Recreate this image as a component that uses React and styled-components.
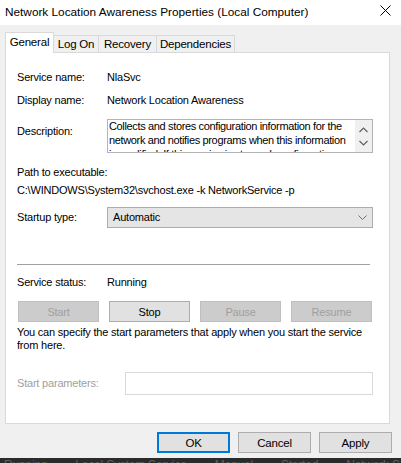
import React from 'react';
import styled, { createGlobalStyle } from 'styled-components';

const GlobalStyle = createGlobalStyle`
  html, body {
    margin: 0;
    padding: 0;
    background: #f0f0f0;
  }
  body {
    font-family: "Liberation Sans", Arial, sans-serif;
    font-size: 11px;
    letter-spacing: -0.2px;
    color: #000;
  }
`;

const tabs = [
  { label: 'General', width: 49 },
  { label: 'Log On', width: 46 },
  { label: 'Recovery', width: 59 },
  { label: 'Dependencies', width: 79 },
];

const description = [
  'Collects and stores configuration information for the',
  'network and notifies programs when this information',
  'is modified. If this service is stopped, configuration',
];

const App = () => {
  return (
    <>
      <GlobalStyle />
      <Window>
        <TitleBar>
          <Title>Network Location Awareness Properties (Local Computer)</Title>
          <CloseIcon width="11" height="11" viewBox="0 0 11 11">
            <path d="M0.5 0.5 L10.5 10.5 M10.5 0.5 L0.5 10.5" stroke="#000" strokeWidth="1" />
          </CloseIcon>
        </TitleBar>

        <Body>
          <TabRow>
            {tabs.map((t, i) => (
              <Tab key={t.label} $width={t.width} $active={i === 0}>
                {t.label}
              </Tab>
            ))}
          </TabRow>

          <Panel>
            <FieldRow $mt={0}>
              <Label>Service name:</Label>
              <Value>NlaSvc</Value>
            </FieldRow>
            <FieldRow $mt={8}>
              <Label>Display name:</Label>
              <Value>Network Location Awareness</Value>
            </FieldRow>

            <FieldRow $mt={11} $top>
              <Label $pt={5}>Description:</Label>
              <DescBox>
                <DescText>
                  {description.map((line) => (
                    <DescLine key={line}>{line}</DescLine>
                  ))}
                </DescText>
                <ScrollBar>
                  <svg width="9" height="6" viewBox="0 0 9 6">
                    <path d="M0.5 5 L4.5 1 L8.5 5" fill="none" stroke="#606060" strokeWidth="1.2" />
                  </svg>
                  <svg width="9" height="6" viewBox="0 0 9 6">
                    <path d="M0.5 1 L4.5 5 L8.5 1" fill="none" stroke="#606060" strokeWidth="1.2" />
                  </svg>
                </ScrollBar>
              </DescBox>
            </FieldRow>

            <PathBlock>
              <div>Path to executable:</div>
              <div>C:\WINDOWS\System32\svchost.exe -k NetworkService -p</div>
            </PathBlock>

            <FieldRow $mt={8}>
              <Label>Startup type:</Label>
              <Dropdown>
                <span>Automatic</span>
                <svg width="9" height="5" viewBox="0 0 9 5">
                  <path d="M0.5 0.5 L4.5 4.5 L8.5 0.5" fill="none" stroke="#707070" strokeWidth="1" />
                </svg>
              </Dropdown>
            </FieldRow>

            <Separator />

            <FieldRow $mt={10}>
              <Label>Service status:</Label>
              <Value>Running</Value>
            </FieldRow>

            <ButtonGrid>
              <ServiceButton disabled>Start</ServiceButton>
              <ServiceButton>Stop</ServiceButton>
              <ServiceButton disabled>Pause</ServiceButton>
              <ServiceButton disabled>Resume</ServiceButton>
            </ButtonGrid>

            <Hint>
              You can specify the start parameters that apply when you start the service
              <br />
              from here.
            </Hint>

            <FieldRow $mt={20} $label={108}>
              <Label $disabled>Start parameters:</Label>
              <ParamInput />
            </FieldRow>
          </Panel>

          <Footer>
            <DialogButton $default>OK</DialogButton>
            <DialogButton>Cancel</DialogButton>
            <DialogButton>Apply</DialogButton>
          </Footer>
        </Body>

        <BehindStrip>
          <span>Running</span>
          <span>Local System Service</span>
          <span>Manual</span>
          <span>Started</span>
          <span>Network Service</span>
        </BehindStrip>
      </Window>
    </>
  );
};

const Window = styled.div`
  width: 401px;
  height: 463px;
  display: flex;
  flex-direction: column;
  background: #f0f0f0;
  overflow: hidden;
`;

const TitleBar = styled.div`
  height: 25px;
  flex: none;
  background: #fff;
  display: flex;
  align-items: center;
  justify-content: space-between;
  padding: 0 10px 0 5px;
  box-sizing: border-box;
`;

const Title = styled.span`
  font-size: 11.8px;
  letter-spacing: 0;
  color: #000;
  white-space: nowrap;
  margin-top: -2px;
`;

const CloseIcon = styled.svg`
  display: block;
  margin-top: -4px;
`;

const Body = styled.div`
  flex: 1;
  padding: 7px 11px 0 5px;
  display: flex;
  flex-direction: column;
`;

const TabRow = styled.div`
  display: flex;
  align-items: flex-end;
  height: 21px;
  margin-bottom: -1px;
  position: relative;
  z-index: 1;
`;

const Tab = styled.div`
  width: ${(p) => p.$width}px;
  height: ${(p) => (p.$active ? 21 : 18)}px;
  box-sizing: border-box;
  display: flex;
  align-items: center;
  justify-content: center;
  padding-bottom: ${(p) => (p.$active ? 2 : 0)}px;
  border: 1px solid #d9d9d9;
  border-bottom: ${(p) => (p.$active ? 'none' : '1px solid #d9d9d9')};
  background: ${(p) => (p.$active ? '#fff' : '#f0f0f0')};
  margin-left: -1px;
  white-space: nowrap;
  font-size: 11.5px;

  &:first-child {
    margin-left: 0;
  }
`;

const Panel = styled.div`
  height: 372px;
  box-sizing: border-box;
  background: #fff;
  border: 1px solid #d9d9d9;
  padding: 17px 16px 0 11px;
  display: flex;
  flex-direction: column;
`;

const FieldRow = styled.div`
  display: grid;
  grid-template-columns: ${(p) => p.$label || 90}px 1fr;
  align-items: ${(p) => (p.$top ? 'start' : 'center')};
  margin-top: ${(p) => p.$mt}px;
  line-height: 15px;
`;

const Label = styled.div`
  padding-top: ${(p) => p.$pt || 0}px;
  color: ${(p) => (p.$disabled ? '#a0a0a0' : '#000')};
  white-space: nowrap;
`;

const Value = styled.div`
  white-space: nowrap;
`;

const DescBox = styled.div`
  height: 34px;
  box-sizing: border-box;
  border: 1px solid #b4b4b4;
  display: flex;
  overflow: hidden;
`;

const DescText = styled.div`
  flex: 1;
  min-width: 0;
  padding: 0 0 0 1px;
  line-height: 14px;
  letter-spacing: -0.35px;
  overflow: hidden;
  margin-top: -1px;
`;

const DescLine = styled.div`
  white-space: nowrap;
`;

const ScrollBar = styled.div`
  width: 17px;
  flex: none;
  background: #f0f0f0;
  display: flex;
  flex-direction: column;
  align-items: center;
  justify-content: space-around;
  padding: 4px 0 3px;
  box-sizing: border-box;

  svg {
    display: block;
  }
`;

const PathBlock = styled.div`
  margin-top: 10px;
  line-height: 18px;
  white-space: nowrap;
`;

const Dropdown = styled.div`
  height: 21px;
  box-sizing: border-box;
  background: #e5e5e5;
  border: 1px solid #acacac;
  display: flex;
  align-items: center;
  justify-content: space-between;
  padding: 0 5px 0 5px;

  svg {
    display: block;
  }
`;

const Separator = styled.div`
  height: 1px;
  width: 353px;
  background: #a0a0a0;
  margin-top: 36px;
`;

const ButtonGrid = styled.div`
  display: grid;
  grid-template-columns: repeat(4, 81px);
  column-gap: 10px;
  margin: 11px 0 0 1px;
`;

const ServiceButton = styled.div`
  height: 21px;
  box-sizing: border-box;
  display: flex;
  align-items: center;
  justify-content: center;
  background: ${(p) => (p.disabled ? '#cccccc' : '#e1e1e1')};
  border: 1px solid ${(p) => (p.disabled ? '#bfbfbf' : '#adadad')};
  color: ${(p) => (p.disabled ? '#a0a0a0' : '#000')};
`;

const Hint = styled.p`
  margin: 4px 0 0;
  line-height: 13px;
  white-space: nowrap;
`;

const ParamInput = styled.div`
  height: 23px;
  box-sizing: border-box;
  background: #fff;
  border: 1px solid #d9d9d9;
`;

const Footer = styled.div`
  display: flex;
  justify-content: flex-end;
  gap: 8px;
  margin: 8px -2px 0 0;
  font-size: 11.5px;
`;

const DialogButton = styled.div`
  width: 73px;
  height: 21px;
  box-sizing: border-box;
  display: flex;
  align-items: center;
  justify-content: center;
  background: #e1e1e1;
  border: ${(p) => (p.$default ? '2px solid #0078d7' : '1px solid #adadad')};
`;

const BehindStrip = styled.div`
  height: 5px;
  flex: none;
  background: #2b2b2b;
  overflow: hidden;
  display: flex;
  gap: 28px;
  padding-left: 4px;
  color: #5e5e5e;
  font-size: 12px;
  line-height: 14px;

  span {
    white-space: nowrap;
  }
`;

export default App;
